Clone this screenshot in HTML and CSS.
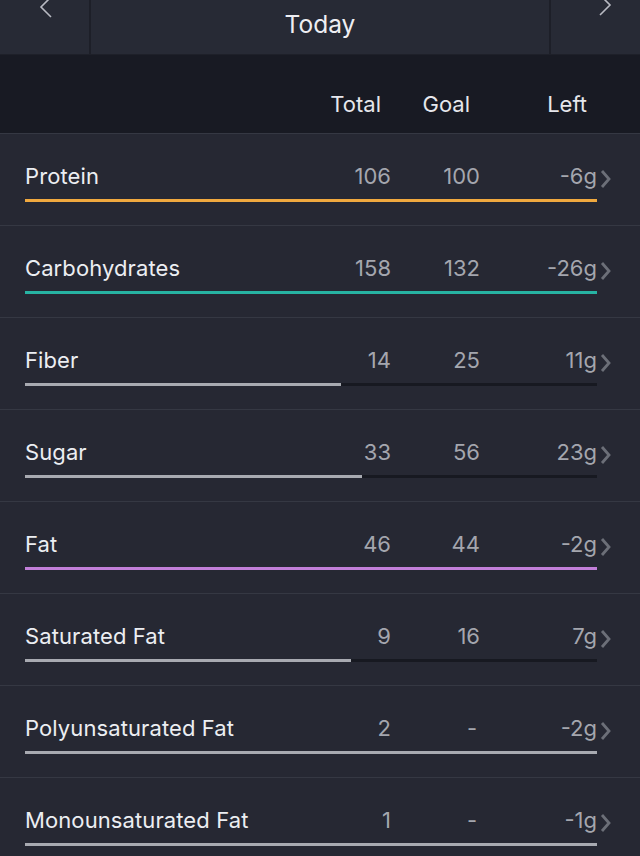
FILE: index.html
```html
<!DOCTYPE html>
<html>
<head>
<meta charset="utf-8">
<link rel="stylesheet" href="styles.css">
</head>
<body>
<div class="nav">
  <div class="nav-btn nav-left">
    <svg width="14" height="22" viewBox="0 0 14 22"><polyline points="12,1 2,11 12,21" fill="none" stroke="#b8bac2" stroke-width="1.6"/></svg>
  </div>
  <div class="nav-title">Today</div>
  <div class="nav-btn nav-right">
    <svg width="14" height="22" viewBox="0 0 14 22"><polyline points="2,1 12,11 2,21" fill="none" stroke="#b8bac2" stroke-width="1.6"/></svg>
  </div>
</div>
<div class="heads">
  <span></span>
  <span class="h">Total</span>
  <span class="h">Goal</span>
  <span class="h">Left</span>
</div>
<div class="list">
  <div class="row">
    <div class="line"><span class="name">Protein</span><span class="v">106</span><span class="v">100</span><span class="v">-6g</span><span class="chev"><svg width="14" height="22" viewBox="0 0 14 22"><polyline points="3,3 10,11 3,19" fill="none" stroke="#6c6f78" stroke-width="2.8"/></svg></span></div>
    <div class="bar"><div class="fill orange" style="width:100%"></div></div>
  </div>
  <div class="row">
    <div class="line"><span class="name">Carbohydrates</span><span class="v">158</span><span class="v">132</span><span class="v">-26g</span><span class="chev"><svg width="14" height="22" viewBox="0 0 14 22"><polyline points="3,3 10,11 3,19" fill="none" stroke="#6c6f78" stroke-width="2.8"/></svg></span></div>
    <div class="bar"><div class="fill teal" style="width:100%"></div></div>
  </div>
  <div class="row">
    <div class="line"><span class="name">Fiber</span><span class="v">14</span><span class="v">25</span><span class="v">11g</span><span class="chev"><svg width="14" height="22" viewBox="0 0 14 22"><polyline points="3,3 10,11 3,19" fill="none" stroke="#6c6f78" stroke-width="2.8"/></svg></span></div>
    <div class="bar"><div class="fill gray" style="width:55.3%"></div></div>
  </div>
  <div class="row">
    <div class="line"><span class="name">Sugar</span><span class="v">33</span><span class="v">56</span><span class="v">23g</span><span class="chev"><svg width="14" height="22" viewBox="0 0 14 22"><polyline points="3,3 10,11 3,19" fill="none" stroke="#6c6f78" stroke-width="2.8"/></svg></span></div>
    <div class="bar"><div class="fill gray" style="width:58.9%"></div></div>
  </div>
  <div class="row">
    <div class="line"><span class="name">Fat</span><span class="v">46</span><span class="v">44</span><span class="v">-2g</span><span class="chev"><svg width="14" height="22" viewBox="0 0 14 22"><polyline points="3,3 10,11 3,19" fill="none" stroke="#6c6f78" stroke-width="2.8"/></svg></span></div>
    <div class="bar"><div class="fill violet" style="width:100%"></div></div>
  </div>
  <div class="row">
    <div class="line"><span class="name">Saturated Fat</span><span class="v">9</span><span class="v">16</span><span class="v">7g</span><span class="chev"><svg width="14" height="22" viewBox="0 0 14 22"><polyline points="3,3 10,11 3,19" fill="none" stroke="#6c6f78" stroke-width="2.8"/></svg></span></div>
    <div class="bar"><div class="fill gray" style="width:57%"></div></div>
  </div>
  <div class="row">
    <div class="line"><span class="name">Polyunsaturated Fat</span><span class="v">2</span><span class="v dash">-</span><span class="v">-2g</span><span class="chev"><svg width="14" height="22" viewBox="0 0 14 22"><polyline points="3,3 10,11 3,19" fill="none" stroke="#6c6f78" stroke-width="2.8"/></svg></span></div>
    <div class="bar"><div class="fill gray" style="width:100%"></div></div>
  </div>
  <div class="row">
    <div class="line"><span class="name">Monounsaturated Fat</span><span class="v">1</span><span class="v dash">-</span><span class="v">-1g</span><span class="chev"><svg width="14" height="22" viewBox="0 0 14 22"><polyline points="3,3 10,11 3,19" fill="none" stroke="#6c6f78" stroke-width="2.8"/></svg></span></div>
    <div class="bar"><div class="fill gray" style="width:100%"></div></div>
  </div>
</div>
</body>
</html>
```
FILE: styles.css
```css
* { box-sizing: border-box; }
html, body {
  margin: 0;
  padding: 0;
  background: #262833;
  font-family: "Inter", "Roboto", "Liberation Sans", sans-serif;
  overflow: hidden;
}
body { width: 640px; height: 856px; }

.nav {
  height: 55px;
  display: grid;
  grid-template-columns: 91px 1fr 91px;
  background: #272a35;
  border-bottom: 1px solid #1e2029;
}
.nav-btn { position: relative; }
.nav-left { border-right: 2px solid #1d1f28; }
.nav-right { border-left: 2px solid #1d1f28; }
.nav-left svg { position: absolute; left: 39px; top: -4px; }
.nav-right svg { position: absolute; left: 47px; top: -6px; }
.nav-title {
  color: #eeeef2;
  font-size: 24.5px;
  text-align: center;
  line-height: 49px;
}

.heads {
  height: 79px;
  background: #181a23;
  border-bottom: 1px solid #353843;
  display: grid;
  grid-template-columns: 1fr 80px 89px 117px 53px;
  align-items: center;
  padding-left: 25px;
  padding-top: 20px;
}
.h {
  color: #e6e7ec;
  font-size: 22px;
  text-align: right;
}

.row {
  height: 92px;
  border-bottom: 1px solid #353843;
  padding: 28px 0 0 25px;
}
.line {
  display: grid;
  grid-template-columns: 1fr 80px 89px 117px 43px;
  align-items: center;
  height: 26px;
}
.name {
  color: #eceef2;
  font-size: 22px;
  letter-spacing: 0.1px;
  white-space: nowrap;
}
.v {
  color: #a4a6ae;
  font-size: 22px;
  text-align: right;
}
.v.dash { padding-right: 3px; }
.chev { padding-left: 2px; padding-top: 6px; display: flex; }
.bar {
  margin-top: 11px;
  width: 572px;
  height: 3px;
  background: #171921;
}
.fill { height: 3px; }
.orange { background: #f0a93f; }
.teal { background: #27b3a3; }
.violet { background: #c27fd9; }
.gray { background: #a8aab1; }
```
